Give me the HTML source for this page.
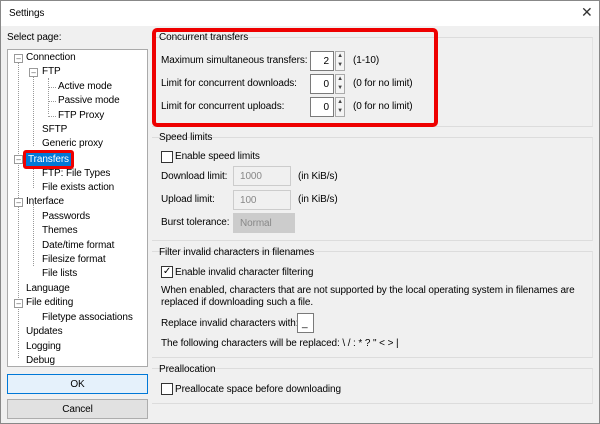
<!DOCTYPE html><html><head><style>
*{margin:0;padding:0;box-sizing:border-box}
body{width:600px;height:424px;overflow:hidden;background:#f0f0f0;font-family:"Liberation Sans",sans-serif;font-size:10px;letter-spacing:-0.1px;color:#000;position:relative;border:1px solid #888}
.a{position:absolute;white-space:nowrap}
.title{left:0;top:0;width:598px;height:25px;background:#fff}
.tree{left:6px;top:48px;width:141px;height:318px;background:#fff;border:1px solid #aaa}
.sec{position:absolute;left:151px;width:441px;border-top:1px solid #dcdcdc;border-bottom:1px solid #dcdcdc;border-right:1px solid #e2e2e2}
.in{position:absolute;background:#fff;border:1px solid #7a7a7a;height:20px;text-align:right;padding:4px 4px 0 0}
.sp{position:absolute;width:10px;height:20px;border:1px solid #aaa;background:#f4f4f4;font-size:6px;line-height:9px;text-align:center;color:#444}
.dis{position:absolute;background:#f0f0f0;border:1px solid #ccc;height:20px;color:#888;padding:4px 0 0 6px}
.cb{position:absolute;width:12px;height:12px;border:1px solid #333;background:#fff}
.btn{position:absolute;left:6px;width:141px;height:20px;background:#e1e1e1;border:1px solid #adadad;text-align:center;padding-top:4px}
.t{position:absolute;white-space:nowrap}
.l{position:absolute;border-left:1px dotted #999}
.h{position:absolute;border-top:1px dotted #999}
.pm{position:absolute;width:9px;height:9px;border:1px solid #999;background:#fff;font-size:8px;line-height:7px;text-align:center;color:#555}
</style></head><body>
<div class="a title"></div>
<div class="a" style="left:8px;top:7px">Settings</div>
<div class="a" style="left:580px;top:3px;font-size:14px;color:#333">✕</div>
<div class="a" style="left:6px;top:31px">Select page:</div>
<div class="a tree">
<div class="l" style="left:10px;top:8px;height:300px"></div>
<div class="l" style="left:25px;top:22px;height:74px"></div>
<div class="l" style="left:40px;top:28px;height:36px"></div>
<div class="l" style="left:25px;top:110px;height:28px"></div>
<div class="l" style="left:25px;top:154px;height:62px"></div>
<div class="pm" style="left:6px;top:4px">–</div><div class="t" style="left:18px;top:2px">Connection</div>
<div class="pm" style="left:21px;top:18px">–</div><div class="t" style="left:34px;top:16px">FTP</div>
<div class="h" style="left:40px;top:37px;width:8px"></div><div class="t" style="left:50px;top:31px">Active mode</div>
<div class="h" style="left:40px;top:51px;width:8px"></div><div class="t" style="left:50px;top:45px">Passive mode</div>
<div class="h" style="left:40px;top:66px;width:8px"></div><div class="t" style="left:50px;top:60px">FTP Proxy</div>
<div class="t" style="left:34px;top:74px">SFTP</div>
<div class="t" style="left:34px;top:88px">Generic proxy</div>
<div class="pm" style="left:6px;top:105px">–</div>
<div class="t" style="left:15px;top:100px;background:#0078d7;color:#fff;padding:1px 2px;border:3px solid #e00;border-radius:3px;line-height:11px">Transfers</div>
<div class="t" style="left:34px;top:118px">FTP: File Types</div>
<div class="t" style="left:34px;top:132px">File exists action</div>
<div class="pm" style="left:6px;top:148px">–</div><div class="t" style="left:18px;top:146px">Interface</div>
<div class="t" style="left:34px;top:161px">Passwords</div>
<div class="t" style="left:34px;top:175px">Themes</div>
<div class="t" style="left:34px;top:190px">Date/time format</div>
<div class="t" style="left:34px;top:204px">Filesize format</div>
<div class="t" style="left:34px;top:218px">File lists</div>
<div class="t" style="left:18px;top:233px">Language</div>
<div class="pm" style="left:6px;top:249px">–</div><div class="t" style="left:18px;top:247px">File editing</div>
<div class="t" style="left:34px;top:262px">Filetype associations</div>
<div class="t" style="left:18px;top:276px">Updates</div>
<div class="t" style="left:18px;top:291px">Logging</div>
<div class="t" style="left:18px;top:305px">Debug</div>
</div>
<div class="btn" style="top:373px;border:1px solid #0078d7;background:#e5f1fb">OK</div>
<div class="btn" style="top:398px">Cancel</div>

<div class="sec" style="top:36px;height:90px"></div>
<div class="sec" style="top:136px;height:104px"></div>
<div class="sec" style="top:250px;height:107px"></div>
<div class="sec" style="top:367px;height:36px"></div>

<div class="a" style="left:158px;top:31px">Concurrent transfers</div>
<div class="a" style="left:160px;top:54px">Maximum simultaneous transfers:</div>
<div class="in" style="left:309px;top:50px;width:24px">2</div><div class="sp" style="left:334px;top:50px">▲<br>▼</div><div class="a" style="left:352px;top:54px">(1-10)</div>
<div class="a" style="left:160px;top:77px">Limit for concurrent downloads:</div>
<div class="in" style="left:309px;top:73px;width:24px">0</div><div class="sp" style="left:334px;top:73px">▲<br>▼</div><div class="a" style="left:352px;top:77px">(0 for no limit)</div>
<div class="a" style="left:160px;top:100px">Limit for concurrent uploads:</div>
<div class="in" style="left:309px;top:96px;width:24px">0</div><div class="sp" style="left:334px;top:96px">▲<br>▼</div><div class="a" style="left:352px;top:100px">(0 for no limit)</div>
<div class="a" style="left:151px;top:27px;width:286px;height:99px;border:4px solid #e00;border-radius:5px"></div>

<div class="a" style="left:158px;top:131px">Speed limits</div>
<div class="cb" style="left:160px;top:150px"></div><div class="a" style="left:174px;top:150px">Enable speed limits</div>
<div class="a" style="left:160px;top:170px">Download limit:</div><div class="dis" style="left:232px;top:165px;width:58px">1000</div><div class="a" style="left:297px;top:170px">(in KiB/s)</div>
<div class="a" style="left:160px;top:193px">Upload limit:</div><div class="dis" style="left:232px;top:189px;width:58px">100</div><div class="a" style="left:297px;top:193px">(in KiB/s)</div>
<div class="a" style="left:160px;top:216px">Burst tolerance:</div><div class="dis" style="left:232px;top:212px;width:62px;background:#ccc;border-color:#ccc">Normal</div>

<div class="a" style="left:158px;top:246px">Filter invalid characters in filenames</div>
<div class="cb" style="left:160px;top:265px;font-size:10px;line-height:10px;text-align:center">✓</div><div class="a" style="left:174px;top:266px">Enable invalid character filtering</div>
<div class="a" style="left:160px;top:284px">When enabled, characters that are not supported by the local operating system in filenames are</div>
<div class="a" style="left:160px;top:296px">replaced if downloading such a file.</div>
<div class="a" style="left:160px;top:317px">Replace invalid characters with:</div><div class="in" style="left:296px;top:312px;width:17px;text-align:left;padding-left:4px">_</div>
<div class="a" style="left:160px;top:337px">The following characters will be replaced: \ / : * ? " &lt; &gt; |</div>

<div class="a" style="left:158px;top:363px">Preallocation</div>
<div class="cb" style="left:160px;top:382px"></div><div class="a" style="left:174px;top:383px">Preallocate space before downloading</div>
</body></html>
